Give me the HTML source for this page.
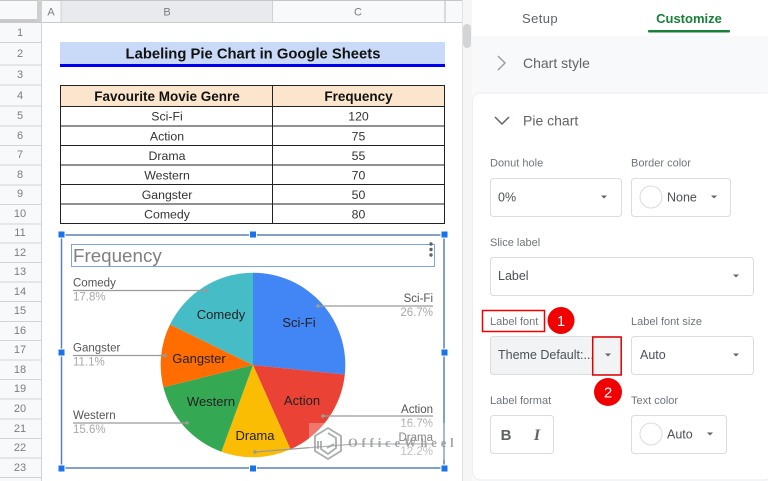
<!DOCTYPE html>
<html><head><meta charset="utf-8"><style>
html,body{margin:0;padding:0;background:#fff;width:768px;height:481px;overflow:hidden}
svg{display:block;font-family:"Liberation Sans",Arial,sans-serif;filter:blur(.3px)}
</style></head><body>
<svg width="768" height="481" viewBox="0 0 768 481" xmlns="http://www.w3.org/2000/svg">
<rect width="768" height="481" fill="#fff"/>
<!-- headers -->
<rect x="0" y="0" width="472" height="22" fill="#f8f9fa"/>
<rect x="0" y="0" width="41" height="481" fill="#f8f9fa"/>
<rect x="61" y="1" width="211" height="21" fill="#e8eaed"/>
<rect x="0" y="0" width="472" height="1" fill="#c4c7c5"/>
<rect x="0" y="19" width="41" height="3" fill="#c8c8c8"/>
<rect x="37" y="0" width="4" height="22" fill="#cfcfcf"/>
<rect x="0" y="22" width="463" height="1" fill="#c8cacc"/>
<g stroke="#d0d2d4" stroke-width="1">
<path d="M41.500 0V481M61 1V22M272.500 1V22M445 1V22"/>
<path d="M0 42.500H41M0 65H41M0 85H41M0 106H41M0 126H41M0 145.500H41M0 165H41M0 185H41M0 204.500H41M0 224H41M0 243H41M0 262.500H41M0 282H41M0 301.500H41M0 321.500H41M0 340.500H41M0 360H41M0 379.500H41M0 399H41M0 419H41M0 438.500H41M0 458H41M0 477.500H41"/>
</g>
<path d="M445 0.500V22" stroke="#bcbcbc"/>
<g font-size="11" fill="#7a7d81" text-anchor="middle">
<text x="51" y="15.500">A</text><text x="167" y="15.500">B</text><text x="358" y="15.500">C</text>
<text x="20" y="36">1</text><text x="20" y="57">2</text><text x="20" y="78">3</text><text x="20" y="99">4</text><text x="20" y="119">5</text><text x="20" y="139">6</text><text x="20" y="158">7</text><text x="20" y="178">8</text><text x="20" y="197">9</text><text x="20" y="217">10</text><text x="20" y="236">11</text><text x="20" y="256">12</text><text x="20" y="275">13</text><text x="20" y="295">14</text><text x="20" y="314">15</text><text x="20" y="334">16</text><text x="20" y="353">17</text><text x="20" y="373">18</text><text x="20" y="392">19</text><text x="20" y="412">20</text><text x="20" y="432">21</text><text x="20" y="451">22</text><text x="20" y="471">23</text>
</g>
<!-- scrollbar -->
<rect x="462" y="0" width="10" height="481" fill="#f6f6f6"/>
<rect x="463" y="24" width="8" height="24" rx="4" fill="#d2d4d6"/>
<path d="M462.500 0V481" stroke="#e3e3e3"/>
<!-- title -->
<rect x="60" y="42" width="385" height="22" fill="#c9daf8"/>
<rect x="60" y="64" width="385" height="3" fill="#0000f0"/>
<text x="253" y="58.500" font-size="14.800" font-weight="bold" fill="#111" text-anchor="middle">Labeling Pie Chart in Google Sheets</text>
<!-- table -->
<rect x="61" y="86" width="384" height="20" fill="#fce5cd"/>
<g stroke="#222" stroke-width="1" fill="none">
<path d="M60.500 85.500H444.500V223.500H60.500ZM272.500 85.500V223.500M60.500 106.500H444.500M60.500 126H444.500M60.500 145.500H444.500M60.500 165H444.500M60.500 184.500H444.500M60.500 204H444.500"/>
</g>
<g font-size="13.500" font-weight="bold" fill="#111" text-anchor="middle">
<text x="167" y="101">Favourite Movie Genre</text><text x="358.500" y="101">Frequency</text>
</g>
<g font-size="12.300" fill="#333" text-anchor="middle">
<text x="167" y="120.500">Sci-Fi</text><text x="358.500" y="120.500">120</text>
<text x="167" y="140.500">Action</text><text x="358.500" y="140.500">75</text>
<text x="167" y="160">Drama</text><text x="358.500" y="160">55</text>
<text x="167" y="179.500">Western</text><text x="358.500" y="179.500">70</text>
<text x="167" y="199">Gangster</text><text x="358.500" y="199">50</text>
<text x="167" y="218.500">Comedy</text><text x="358.500" y="218.500">80</text>
</g>
<!-- chart -->
<rect x="61.500" y="235" width="382.500" height="233" fill="#fff" stroke="#5a80b8" stroke-width="1.500"/>
<rect x="71.500" y="244.500" width="363" height="22" fill="#fff" stroke="#7ea6e6" stroke-width="1"/>
<text x="73" y="262" font-size="18.800" fill="#808080">Frequency</text>
<g fill="#5f6368"><circle cx="431" cy="244" r="1.700"/><circle cx="431" cy="249.500" r="1.700"/><circle cx="431" cy="255" r="1.700"/></g>
<g fill="#1a73e8" stroke="#fff" stroke-width="1">
<rect x="58" y="231" width="7" height="7"/><rect x="249.500" y="231" width="7" height="7"/><rect x="441" y="231" width="7" height="7"/>
<rect x="58" y="349" width="7" height="7"/><rect x="441" y="349" width="7" height="7"/>
<rect x="58" y="465" width="7" height="7"/><rect x="249.500" y="465" width="7" height="7"/><rect x="441" y="465" width="7" height="7"/>
</g>
<!-- pie -->
<path d="M253 365L253 272.700A92.300 92.300 0 0 1 344.800 374.600Z" fill="#4285f4"/>
<path d="M253 365L344.800 374.600A92.300 92.300 0 0 1 290.500 449.300Z" fill="#ea4335"/>
<path d="M253 365L290.500 449.300A92.300 92.300 0 0 1 221.400 451.700Z" fill="#fbbc04"/>
<path d="M253 365L221.400 451.700A92.300 92.300 0 0 1 163.400 387.300Z" fill="#34a853"/>
<path d="M253 365L163.400 387.300A92.300 92.300 0 0 1 170 324.500Z" fill="#ff6d01"/>
<path d="M253 365L170 324.500A92.300 92.300 0 0 1 253 272.700Z" fill="#46bdc6"/>
<g font-size="13" fill="#222" text-anchor="middle">
<text x="299" y="327">Sci-Fi</text><text x="302" y="405">Action</text><text x="255" y="440">Drama</text>
<text x="211" y="406">Western</text><text x="199" y="363">Gangster</text><text x="221" y="319">Comedy</text>
</g>
<!-- leaders -->
<g stroke="#9a9a9a" stroke-width="1.300" fill="none">
<path d="M73 290.500H206M73 355.500H165M73 423H187M318 306H433M323 416H433M255 452L355 444H433"/>
</g>
<g fill="#9a9a9a"><circle cx="206" cy="290.500" r="1.800"/><circle cx="165" cy="355.500" r="1.800"/><circle cx="187" cy="423" r="1.800"/><circle cx="318" cy="306" r="1.800"/><circle cx="323" cy="416" r="1.800"/><circle cx="255" cy="452" r="1.800"/></g>
<g font-size="11.500" fill="#555">
<text x="73" y="286.500">Comedy</text><text x="73" y="351.500">Gangster</text><text x="73" y="419">Western</text>
<text x="433" y="302" text-anchor="end">Sci-Fi</text><text x="433" y="413" text-anchor="end">Action</text><text x="433" y="441" text-anchor="end">Drama</text>
</g>
<g font-size="11.500" fill="#a8a8a8">
<text x="73" y="300.500">17.8%</text><text x="73" y="365.500">11.1%</text><text x="73" y="433">15.6%</text>
<text x="433" y="316" text-anchor="end">26.7%</text><text x="433" y="427" text-anchor="end">16.7%</text><text x="433" y="455" text-anchor="end">12.2%</text>
</g>
<!-- watermark -->
<rect x="309" y="423" width="150" height="37" fill="#fff" opacity=".28"/>
<g fill="none" stroke="#8e9296" stroke-width="1.800" opacity=".75">
<path d="M328 428L341 436V451L328 459L315 451V436Z"/>
<path d="M328 433L336 438V448L328 454L321 449V441"/>
<path d="M327 448L334 444M318 441V449"/>
</g>
<text x="348" y="447" font-size="12.500" font-family="Liberation Serif,serif" font-weight="bold" letter-spacing="3.900" fill="#8e9296" opacity=".8">OfficeWheel</text>
<!-- panel -->
<rect x="472" y="0" width="296" height="481" fill="#f8f9fa"/>
<rect x="472" y="0" width="296" height="36" fill="#fff"/>
<text x="540" y="23" font-size="13" fill="#5f6368" text-anchor="middle" letter-spacing=".4">Setup</text>
<text x="689" y="23" font-size="13" fill="#188038" text-anchor="middle" font-weight="bold">Customize</text>
<rect x="648" y="30" width="82" height="2.500" rx="1" fill="#188038"/>
<path d="M498 56L505 63L498 70" fill="none" stroke="#9aa0a6" stroke-width="1.500"/>
<text x="523" y="68" font-size="14" fill="#5f6368">Chart style</text>
<rect x="472.500" y="93" width="300" height="387" rx="8" fill="#fff" stroke="#eceef0"/>
<path d="M495 117L502 124L509 117" fill="none" stroke="#5f6368" stroke-width="1.500"/>
<text x="523" y="125.500" font-size="14" fill="#5f6368">Pie chart</text>
<g font-size="11" fill="#70757a">
<text x="490" y="166.500">Donut hole</text><text x="631" y="166.500">Border color</text>
<text x="490" y="246">Slice label</text>
<text x="490" y="325">Label font</text><text x="631" y="325">Label font size</text>
<text x="490" y="404">Label format</text><text x="631" y="404">Text color</text>
</g>
<g fill="none" stroke="#dadce0">
<rect x="490.500" y="178.500" width="131" height="38" rx="3"/>
<rect x="631.500" y="178.500" width="99" height="38" rx="3"/>
<rect x="490.500" y="257.500" width="263" height="38" rx="3"/>
<rect x="490.500" y="336.500" width="131" height="38" rx="3" fill="#f1f3f4"/>
<rect x="631.500" y="336.500" width="122" height="38" rx="3"/>
<rect x="490.500" y="415.500" width="63" height="38" rx="3"/>
<rect x="631.500" y="415.500" width="95" height="38" rx="3"/>
<circle cx="651" cy="197" r="11"/>
<circle cx="651" cy="434" r="11"/>
</g>
<g font-size="12.500" fill="#4d5156">
<text x="498" y="201.500">0%</text><text x="667" y="201.500">None</text>
<text x="498" y="280">Label</text>
<text x="498" y="359">Theme Default:...</text><text x="640" y="359">Auto</text>
<text x="667" y="438.500">Auto</text>
</g>
<g fill="#5f6368">
<path d="M601 195.500H607L604 198.500Z"/><path d="M711 195.500H717L714 198.500Z"/>
<path d="M733 274.500H739L736 277.500Z"/>
<path d="M605 353.500H611L608 356.500Z"/><path d="M733 353.500H739L736 356.500Z"/>
<path d="M707 432.500H713L710 435.500Z"/>
</g>
<text x="506" y="440" font-size="15" font-weight="bold" fill="#5f6368" text-anchor="middle">B</text>
<text x="537" y="440" font-size="16" font-weight="bold" font-style="italic" fill="#5f6368" text-anchor="middle" font-family="Liberation Serif,serif">I</text>
<!-- annotations -->
<rect x="482.500" y="310.500" width="62" height="21" fill="none" stroke="#f00000" stroke-width="1.500"/>
<rect x="592.700" y="337" width="28.500" height="38" fill="none" stroke="#e00000" stroke-width="1.500"/>
<circle cx="561" cy="320.500" r="13.500" fill="#f00000"/>
<circle cx="608" cy="392" r="14" fill="#f00000"/>
<text x="561" y="326" font-size="15" fill="#fff" text-anchor="middle">1</text>
<text x="608" y="397.500" font-size="15" fill="#fff" text-anchor="middle">2</text>
</svg>
</body></html>
